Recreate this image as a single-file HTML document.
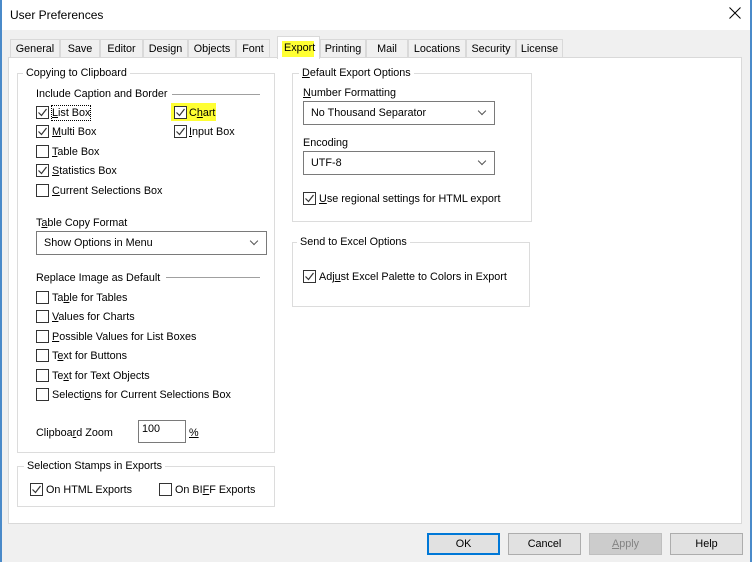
<!DOCTYPE html>
<html><head><meta charset="utf-8"><style>
*{margin:0;padding:0;box-sizing:border-box}
body{width:752px;height:562px;background:#f0f0f0;font-family:"Liberation Sans",sans-serif;font-size:10.8px;color:#000;position:relative;overflow:hidden}
.a{position:absolute;white-space:nowrap}
.title{left:0;top:0;width:752px;height:30px;background:#fff}
.tab{position:absolute;top:39px;height:19px;border:1px solid #d9d9d9;border-bottom:none;background:#f0f0f0;padding-top:3px;text-align:center}
.panel{left:8px;top:57px;width:734px;height:467px;background:#fff;border:1px solid #d9d9d9}
.grp{position:absolute;border:1px solid #dcdcdc}
.lg{position:absolute;background:#fff;padding:0 3px;line-height:13px}
.cb{position:absolute;width:13px;height:13px;border:1px solid #333;background:#fff}
.cb svg{position:absolute;left:0;top:0}
.t{position:absolute;line-height:14px;white-space:nowrap}
.sel{position:absolute;height:24px;border:1px solid #7a7a7a;background:#fff;padding:5px 0 0 7px;white-space:nowrap}
.sel::after{content:"";position:absolute;right:9px;top:6px;width:5px;height:5px;border:solid #555;border-width:0 1px 1px 0;transform:rotate(45deg)}
.hl{position:absolute;background:#ffff33}
.btn{position:absolute;top:533px;width:73px;height:22px;background:#e1e1e1;border:1px solid #adadad;text-align:center;line-height:20px}
u{text-decoration:underline}
</style></head><body>
<div class="a title"></div>
<div class="a" style="left:10px;top:8px;font-size:12px">User Preferences</div>
<svg class="a" style="left:729px;top:7px" width="12" height="12"><path d="M0.5 0.5L11.5 11.5M11.5 0.5L0.5 11.5" stroke="#000" stroke-width="1"/></svg>
<div class="a" style="left:750px;top:0;width:2px;height:562px;background:#4a8ac9"></div>
<div class="a" style="left:0;top:0;width:2px;height:562px;background:#4a8ac9"></div>

<div class="tab" style="left:10px;width:50px">General</div>
<div class="tab" style="left:60px;width:40px">Save</div>
<div class="tab" style="left:100px;width:43px">Editor</div>
<div class="tab" style="left:143px;width:45px">Design</div>
<div class="tab" style="left:188px;width:48px">Objects</div>
<div class="tab" style="left:236px;width:34px">Font</div>
<div class="tab" style="left:320px;width:46px">Printing</div>
<div class="tab" style="left:366px;width:42px">Mail</div>
<div class="tab" style="left:408px;width:58px">Locations</div>
<div class="tab" style="left:466px;width:50px">Security</div>
<div class="tab" style="left:516px;width:47px">License</div>

<div class="a panel"></div>
<div class="tab" style="left:277px;top:36px;width:43px;height:23px;background:#fff;z-index:2"></div>
<div class="hl" style="left:282px;top:41px;width:32px;height:16px;z-index:3"></div>
<div class="a" style="left:284px;top:42px;z-index:4">Export</div>

<div class="grp" style="left:17px;top:73px;width:258px;height:380px"></div>
<div class="lg" style="left:23px;top:67px">Copying to Clipboard</div>
<div class="t" style="left:36px;top:87px">Include Caption and Border</div>
<div class="a" style="left:172px;top:94px;width:88px;height:1px;background:#a0a0a0"></div>

<div class="hl" style="left:171px;top:103px;width:45px;height:18px"></div>
<div class="cb" style="left:36px;top:106px"><svg width="11" height="11"><path d="M1.5 5.5L4.5 8.5L9.5 2" fill="none" stroke="#333" stroke-width="1.2"/></svg></div><div class="t" style="left:52px;top:106px;outline:1px dotted #000"><u>L</u>ist Box</div>
<div class="cb" style="left:174px;top:106px"><svg width="11" height="11"><path d="M1.5 5.5L4.5 8.5L9.5 2" fill="none" stroke="#333" stroke-width="1.2"/></svg></div><div class="t" style="left:189px;top:106px">C<u>h</u>art</div>
<div class="cb" style="left:36px;top:125px"><svg width="11" height="11"><path d="M1.5 5.5L4.5 8.5L9.5 2" fill="none" stroke="#333" stroke-width="1.2"/></svg></div><div class="t" style="left:52px;top:125px"><u>M</u>ulti Box</div>
<div class="cb" style="left:174px;top:125px"><svg width="11" height="11"><path d="M1.5 5.5L4.5 8.5L9.5 2" fill="none" stroke="#333" stroke-width="1.2"/></svg></div><div class="t" style="left:189px;top:125px"><u>I</u>nput Box</div>
<div class="cb" style="left:36px;top:145px"></div><div class="t" style="left:52px;top:145px"><u>T</u>able Box</div>
<div class="cb" style="left:36px;top:164px"><svg width="11" height="11"><path d="M1.5 5.5L4.5 8.5L9.5 2" fill="none" stroke="#333" stroke-width="1.2"/></svg></div><div class="t" style="left:52px;top:164px"><u>S</u>tatistics Box</div>
<div class="cb" style="left:36px;top:184px"></div><div class="t" style="left:52px;top:184px"><u>C</u>urrent Selections Box</div>

<div class="t" style="left:36px;top:216px">T<u>a</u>ble Copy Format</div>
<div class="sel" style="left:36px;top:231px;width:231px">Show Options in Menu</div>

<div class="t" style="left:36px;top:271px">Replace Image as Default</div>
<div class="a" style="left:166px;top:277px;width:94px;height:1px;background:#a0a0a0"></div>
<div class="cb" style="left:36px;top:291px"></div><div class="t" style="left:52px;top:291px">Ta<u>b</u>le for Tables</div>
<div class="cb" style="left:36px;top:310px"></div><div class="t" style="left:52px;top:310px"><u>V</u>alues for Charts</div>
<div class="cb" style="left:36px;top:330px"></div><div class="t" style="left:52px;top:330px"><u>P</u>ossible Values for List Boxes</div>
<div class="cb" style="left:36px;top:349px"></div><div class="t" style="left:52px;top:349px">T<u>e</u>xt for Buttons</div>
<div class="cb" style="left:36px;top:369px"></div><div class="t" style="left:52px;top:369px">Te<u>x</u>t for Text Objects</div>
<div class="cb" style="left:36px;top:388px"></div><div class="t" style="left:52px;top:388px">Selecti<u>o</u>ns for Current Selections Box</div>

<div class="t" style="left:36px;top:426px">Clipboa<u>r</u>d Zoom</div>
<div class="a" style="left:138px;top:420px;width:48px;height:23px;border:1px solid #7a7a7a;padding:2px 0 0 3px">100</div>
<div class="t" style="left:189px;top:426px"><u>%</u></div>

<div class="grp" style="left:17px;top:466px;width:258px;height:41px"></div>
<div class="lg" style="left:24px;top:460px">Selection Stamps in Exports</div>
<div class="cb" style="left:30px;top:483px"><svg width="11" height="11"><path d="M1.5 5.5L4.5 8.5L9.5 2" fill="none" stroke="#333" stroke-width="1.2"/></svg></div><div class="t" style="left:46px;top:483px">On HTML Exports</div>
<div class="cb" style="left:159px;top:483px"></div><div class="t" style="left:175px;top:483px">On BI<u>F</u>F Exports</div>

<div class="grp" style="left:292px;top:73px;width:240px;height:149px"></div>
<div class="lg" style="left:299px;top:67px"><u>D</u>efault Export Options</div>
<div class="t" style="left:303px;top:86px"><u>N</u>umber Formatting</div>
<div class="sel" style="left:303px;top:101px;width:192px">No Thousand Separator</div>
<div class="t" style="left:303px;top:136px">Encodin<u>g</u></div>
<div class="sel" style="left:303px;top:151px;width:192px">UTF-8</div>
<div class="cb" style="left:303px;top:192px"><svg width="11" height="11"><path d="M1.5 5.5L4.5 8.5L9.5 2" fill="none" stroke="#333" stroke-width="1.2"/></svg></div><div class="t" style="left:319px;top:192px"><u>U</u>se regional settings for HTML export</div>

<div class="grp" style="left:292px;top:242px;width:238px;height:65px"></div>
<div class="lg" style="left:297px;top:236px">Send to Excel Options</div>
<div class="cb" style="left:303px;top:270px"><svg width="11" height="11"><path d="M1.5 5.5L4.5 8.5L9.5 2" fill="none" stroke="#333" stroke-width="1.2"/></svg></div><div class="t" style="left:319px;top:270px">Adj<u>u</u>st Excel Palette to Colors in Export</div>

<div class="btn" style="left:427px;border:2px solid #0078d7;line-height:18px">OK</div>
<div class="btn" style="left:508px">Cancel</div>
<div class="btn" style="left:589px;background:#ccc;border-color:#bfbfbf;color:#838383"><u>A</u>pply</div>
<div class="btn" style="left:670px">Help</div>
</body></html>
